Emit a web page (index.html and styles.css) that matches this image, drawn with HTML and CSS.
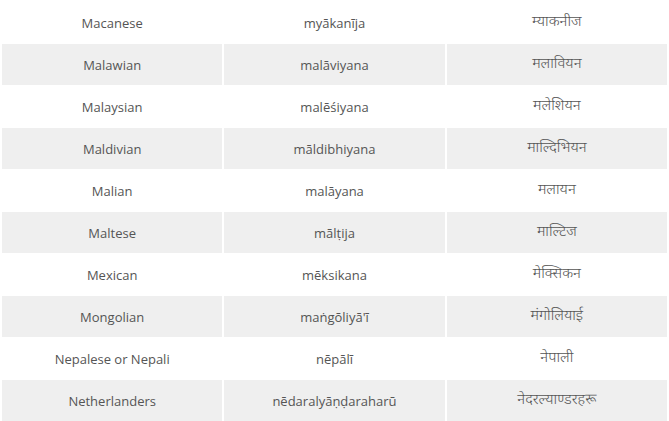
FILE: index.html
```html
<!DOCTYPE html>
<html lang="en">
<head>
<meta charset="utf-8">
<link rel="stylesheet" href="styles.css">
</head>
<body>
<table class="words">
<tbody>
<tr><td>Macanese</td><td>myākanīja</td><td class="dev">म्याकनीज</td></tr>
<tr><td>Malawian</td><td>malāviyana</td><td class="dev">मलावियन</td></tr>
<tr><td>Malaysian</td><td>malēśiyana</td><td class="dev">मलेशियन</td></tr>
<tr><td>Maldivian</td><td>māldibhiyana</td><td class="dev">माल्दिभियन</td></tr>
<tr><td>Malian</td><td>malāyana</td><td class="dev">मलायन</td></tr>
<tr><td>Maltese</td><td>mālṭija</td><td class="dev">माल्टिज</td></tr>
<tr><td>Mexican</td><td>mēksikana</td><td class="dev">मेक्सिकन</td></tr>
<tr><td>Mongolian</td><td>maṅgōliyā'ī</td><td class="dev">मंगोलियाई</td></tr>
<tr><td>Nepalese or Nepali</td><td>nēpālī</td><td class="dev">नेपाली</td></tr>
<tr><td>Netherlanders</td><td>nēdaralyāṇḍaraharū</td><td class="dev">नेदरल्याण्डरहरू</td></tr>
</tbody>
</table>
</body>
</html>
```
FILE: styles.css
```css
html, body {
  margin: 0;
  padding: 0;
  background: #ffffff;
}
body {
  font-family: "Open Sans", "Noto Sans", sans-serif;
  font-size: 13px;
  color: #555555;
}
.words {
  width: 669px;
  border-collapse: separate;
  border-spacing: 2px 0;
  margin-top: 1px;
  table-layout: fixed;
}
.words td {
  height: 42px;
  padding: 0 6px;
  text-align: center;
  vertical-align: middle;
  box-sizing: border-box;
  border-top: 1px solid #ffffff;
}
.words tr:nth-child(even) td {
  background: #efefef;
}
.words td.dev {
  font-family: "Noto Sans Devanagari", "Lohit Devanagari", "FreeSans", sans-serif;
  font-size: 15px;
  font-weight: 300;
  color: #555555;
  padding-bottom: 1px;
}
```
